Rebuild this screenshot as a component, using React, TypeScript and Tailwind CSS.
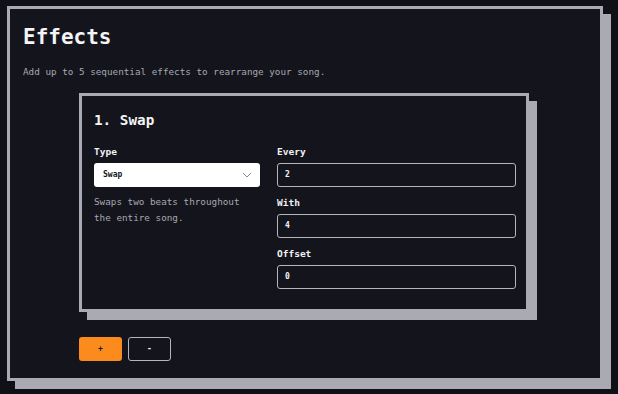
import React from "react";

const mono = { fontFamily: '"DejaVu Sans Mono", "Liberation Mono", monospace' };

function Field({ label, value }: { label: string; value: string }) {
  return (
    <div className="flex flex-col">
      <div className="text-[9.5px] font-bold text-[#f1f1f4] leading-[12px] mb-[5px]">{label}</div>
      <div className="h-[24px] border border-[#b4b5bd] rounded-[3px] flex items-center px-[7px] text-[8px] font-bold text-[#f1f1f4]">
        {value}
      </div>
    </div>
  );
}

export default function App() {
  return (
    <div className="w-[618px] h-[394px] bg-[#101117] pt-[6px] pl-[7px] overflow-hidden" style={mono}>
      <div className="w-[596px] h-[375px] border-[3px] border-[#a9aab3] bg-[#14151c] shadow-[8px_8px_0_0_#a9aab3] pt-[12px] px-[13px]">
        <h1 className="text-[21px] font-bold text-[#f4f4f6] leading-[32px]">Effects</h1>
        <p className="mt-[12px] text-[9.3px] text-[#a7a8b0] leading-[14px]">
          Add up to 5 sequential effects to rearrange your song.
        </p>
        <div className="ml-[56px] mt-[14px] w-[450px] h-[219px] border-[3px] border-[#a9aab3] shadow-[8px_8px_0_0_#a9aab3] bg-[#14151c] pt-[14px] pl-[12px] pr-[10px]">
          <h2 className="text-[14.3px] font-bold text-[#f4f4f6] leading-[20px]">1. Swap</h2>
          <div className="flex gap-[17px] mt-[16px]">
            <div className="w-[166px] flex flex-col">
              <div className="text-[9.5px] font-bold text-[#f1f1f4] leading-[12px] mb-[5px]">Type</div>
              <div className="h-[24px] bg-white rounded-[3px] flex items-center justify-between pl-[9px] pr-[8px]">
                <span className="text-[8px] font-bold text-[#15161c]">Swap</span>
                <svg width="10" height="6" viewBox="0 0 10 6" fill="none">
                  <path d="M1 1l4 4 4-4" stroke="#8a8b92" strokeWidth="1" />
                </svg>
              </div>
              <p className="mt-[7px] text-[9.3px] text-[#a7a8b0] leading-[16px]">
                Swaps two beats throughout the entire song.
              </p>
            </div>
            <div className="flex-1 flex flex-col gap-[10px]">
              <Field label="Every" value="2" />
              <Field label="With" value="4" />
              <Field label="Offset" value="0" />
            </div>
          </div>
        </div>
        <div className="ml-[56px] mt-[25px] flex gap-[6px]">
          <button className="w-[43px] h-[24px] rounded-[3px] bg-[#fb8b1c] text-[#1a1a1a] text-[8px] font-bold flex items-center justify-center">
            +
          </button>
          <button className="w-[43px] h-[24px] rounded-[3px] border border-[#b4b5bd] text-[#f1f1f4] text-[8px] font-bold flex items-center justify-center">
            -
          </button>
        </div>
      </div>
    </div>
  );
}
